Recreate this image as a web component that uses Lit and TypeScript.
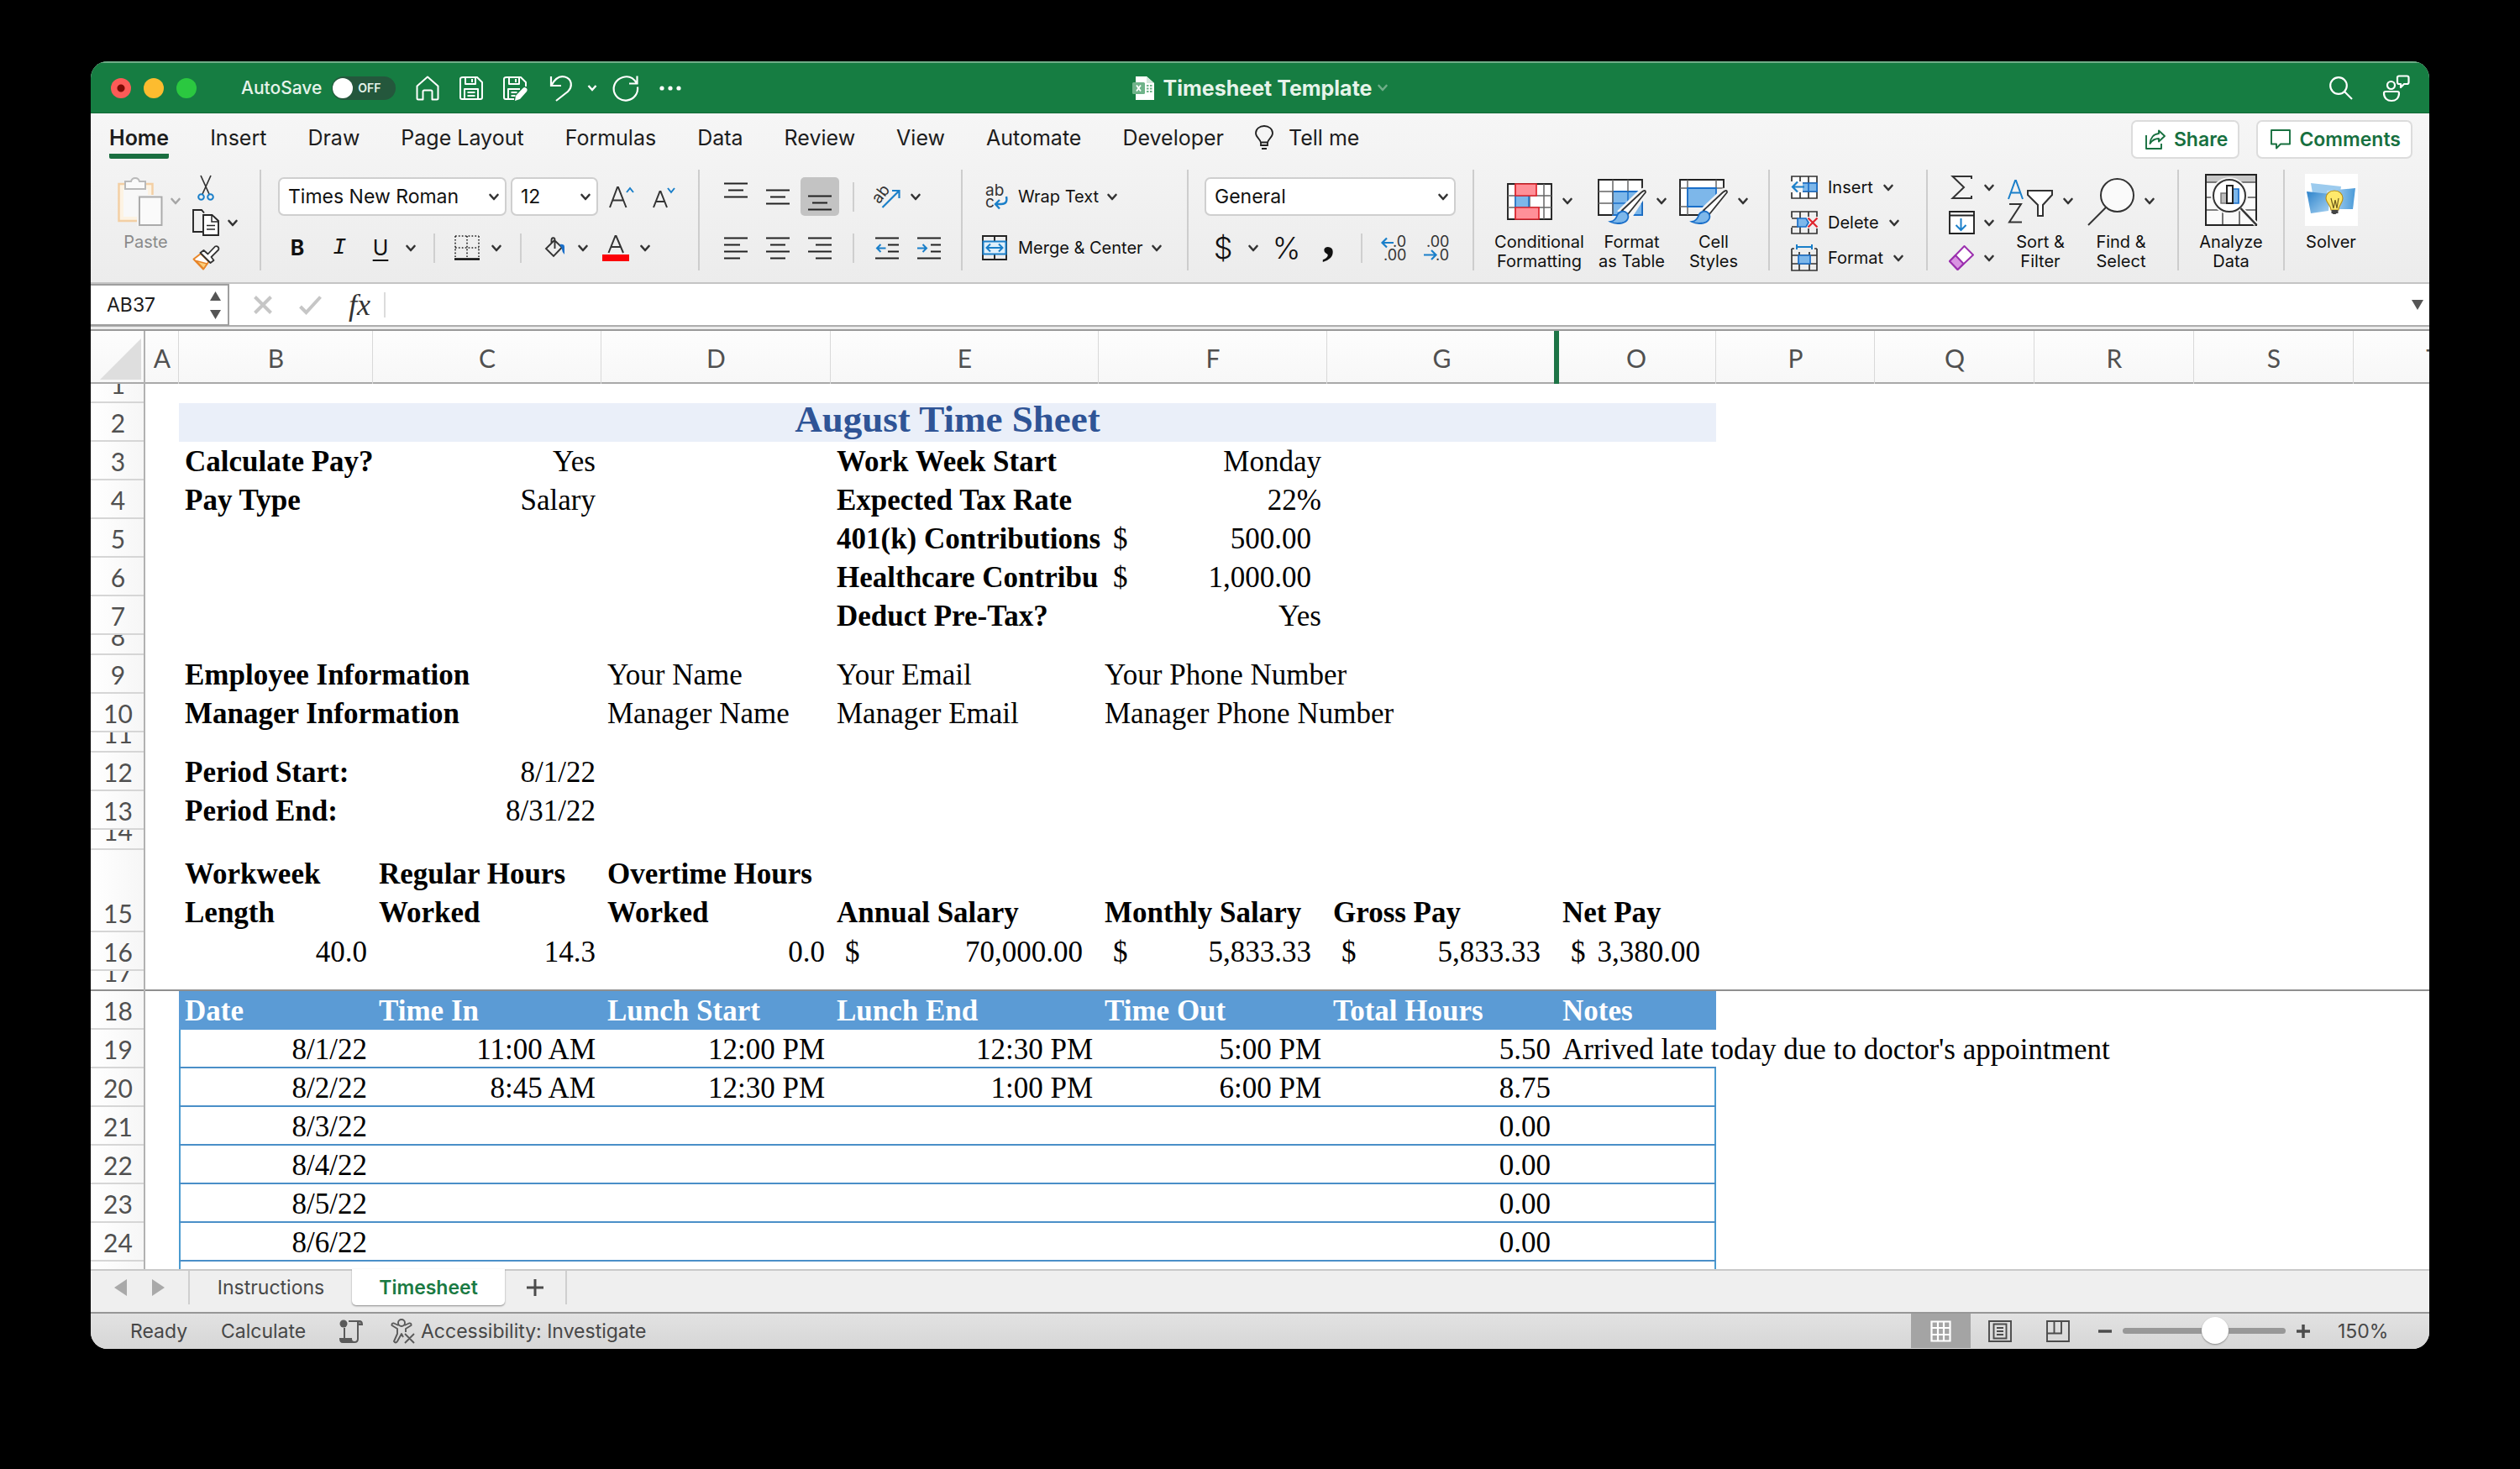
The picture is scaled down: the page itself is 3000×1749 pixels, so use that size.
import { LitElement, html, css, nothing, TemplateResult } from "lit";
import { customElement } from "lit/decorators.js";
import { classMap } from "lit/directives/class-map.js";
import { styleMap } from "lit/directives/style-map.js";

/* ---------- icons ---------- */

const chevron = html`<svg class="chev" width="12" height="9" viewBox="0 0 12 9" fill="none" stroke="currentColor" stroke-width="2.6" stroke-linecap="round" stroke-linejoin="round"><path d="M1.5 2 6 7l4.500-5"/></svg>`;

const ico = {
  home: html`<svg width="28" height="30" viewBox="0 0 28 30" fill="none" stroke="#fff" stroke-width="2" stroke-linejoin="round"><path d="M1.500 12.500 14 1.500l12.500 11V27q0 1.500-1.500 1.500h-5.500V19q0-1.500-1.500-1.500h-8Q8.500 17.500 8.500 19v9.500H3q-1.500 0-1.500-1.500z"/></svg>`,
  save: html`<svg width="28" height="30" viewBox="0 0 28 30" fill="none" stroke="#fff" stroke-width="2" stroke-linejoin="round"><path d="M4 2h17l6 6v18q0 2-2 2H3q-2 0-2-2V4q0-2 3-2zM7 2v8h12V2M15 4v4M6 28V16h16v12M9.500 20h9M9.500 24h9"/></svg>`,
  saveAs: html`<svg width="30" height="32" viewBox="0 0 30 32" fill="none" stroke="#fff" stroke-width="2" stroke-linejoin="round"><path d="M13 29H3q-2 0-2-2V5q0-2 3-2h17l6 6v5M7 3v8h12V3M15 5v4M6 29V17h14M9.500 21h7M9.500 25h5"/><path d="M27 15.500c2 1 2 3 1 4.500l-8 9-6 2 1-6 8.500-9q2-1.500 3.500-.5z" fill="#fff" stroke="none"/></svg>`,
  undo: html`<svg width="28" height="32" viewBox="0 0 28 32" fill="none" stroke="#fff" stroke-width="2.200"><path d="M3 2v11h12M3.500 12.500C8 4 14 1 19.500 2.500 28 5 29 14 23 20L9 31"/></svg>`,
  redo: html`<svg width="32" height="32" viewBox="0 0 32 32" fill="none" stroke="#fff" stroke-width="2.200"><path d="M29.500 1.500v9H20M29 10C25 3.500 19 1 12.500 3 4 5.500.500 13 2 20c2 7.500 9 11.500 16 10.300C26 29 31 22 30 14.500"/></svg>`,
  dots: html`<svg width="26" height="8" viewBox="0 0 26 8" fill="#fff"><circle cx="3" cy="4" r="2.600"/><circle cx="13" cy="4" r="2.600"/><circle cx="23" cy="4" r="2.600"/></svg>`,
  doc: html`<svg width="27" height="28" viewBox="0 0 27 28"><path d="M4 0h13l9 8v20H4z" fill="#fff"/><path d="M17 0v8h9z" fill="#d5e8dc"/><rect x="0" y="7" width="15" height="14" rx="1.500" fill="#6fb389"/><path d="m5 10.500 5 7m0-7-5 7" stroke="#fff" stroke-width="1.800"/><path d="M17 11h2.500M21 11h2.500M17 14.500h2.500M21 14.500h2.500M17 18h2.500M21 18h2.500" stroke="#6fb389" stroke-width="2"/></svg>`,
  search: html`<svg width="28" height="28" viewBox="0 0 28 28" fill="none" stroke="#fff" stroke-width="2.200"><circle cx="11" cy="11" r="9.800"/><path d="m18 18 9 9"/></svg>`,
  people: html`<svg width="32" height="32" viewBox="0 0 32 32" fill="none" stroke="#fff" stroke-width="2.200" stroke-linejoin="round"><circle cx="9.500" cy="12.500" r="4.500"/><path d="M3 20h14q2 0 2 2c0 6-4 9-9 9s-9-3-9-9q0-2 2-2zM19 1.500h9.500q2 0 2 2V9q0 2-2 2H25l-4 4v-4h-2q-2 0-2-2V3.500q0-2 2-2z"/></svg>`,
  bulb: html`<svg width="22" height="29" viewBox="0 0 22 29" fill="none" stroke="#222" stroke-width="1.800"><path d="M7 24v-3C7 17 1 15 1 9.500 1 4.500 5.500 1 11 1s10 3.500 10 8.500C21 15 15 17 15 21v3zM7 20.500h8"/><path d="M8 28h6" stroke-width="2.200"/></svg>`,
  share: html`<svg width="24" height="24" viewBox="0 0 24 24" fill="none" stroke="#17703f" stroke-width="1.900" stroke-linejoin="round"><path d="M1 7v16h18v-6"/><path d="M16 1.500 23 8l-7 6.500V11C11 11 8 13 5.500 17 6 10 10 5.500 16 5z"/></svg>`,
  comment: html`<svg width="24" height="24" viewBox="0 0 24 24" fill="none" stroke="#17703f" stroke-width="1.900" stroke-linejoin="round"><path d="M1 1h22v16.500H12L7 22.500v-5H1z"/></svg>`,
  paste: html`<svg width="54" height="58" viewBox="0 0 54 58"><path d="M1.500 8h40v44h-40z" fill="#fdf3e3" stroke="#f3cfa4" stroke-width="2.500"/><path d="M7 14h29v33H7z" fill="#f8f8f8"/><path d="M9 5h7q1-4 5-4t5 4h7v9H9z" fill="#fafafa" stroke="#b9b9b9" stroke-width="2"/><path d="M23 21h31v37H23z" fill="#f4f4f4"/><path d="M26 23.500h26.500V57H26z" fill="#fafafa" stroke="#ababab" stroke-width="2"/></svg>`,
  cut: html`<svg width="20" height="31" viewBox="0 0 20 31" fill="none"><path d="m4 1 10 22M16 1 6 23" stroke="#333" stroke-width="1.700"/><circle cx="4.500" cy="26.500" r="3.300" stroke="#1a7fc9" stroke-width="2"/><circle cx="15.500" cy="26.500" r="3.300" stroke="#1a7fc9" stroke-width="2"/></svg>`,
  copy: html`<svg width="32" height="32" viewBox="0 0 32 32" fill="none" stroke="#262626" stroke-width="1.900"><path d="M12 27H1V1h10l3 3.500"/><path d="M13 7h10.500L31 14v17H13z" fill="#fff"/><path d="M23 7v8h8M17 19.500h10M17 24h10" stroke-width="1.500"/></svg>`,
  brush: html`<svg width="32" height="30" viewBox="0 0 32 30" stroke-linejoin="round"><path d="m10 10-8.500 6.500L13 28.500l6.500-9z" fill="#fff" stroke="#e8862a" stroke-width="2"/><path d="m4.500 18.500 9 9.500 4-6z" fill="#fbcf7d" stroke="#e8862a" stroke-width="1.600"/><path d="m9.500 9 4-3 5 4.500 8.500-9q2-1 3.500.5t.5 3.500l-8.500 8.500 3 4-4 3z" fill="#fff" stroke="#333" stroke-width="1.800"/></svg>`,
  grow: html`<svg width="30" height="28" viewBox="0 0 30 28" fill="none"><path d="M1 27 10 3h1l9.500 24M4.500 18.500h12.500" stroke="#333" stroke-width="2"/><path d="m21 9 4-5 4 5" stroke="#1a7fc9" stroke-width="2"/></svg>`,
  shrink: html`<svg width="27" height="28" viewBox="0 0 27 28" fill="none"><path d="M1 27 8.500 8h1L17 27M4 20h10.500" stroke="#333" stroke-width="2"/><path d="m18 4 4 5 4-5" stroke="#1a7fc9" stroke-width="2"/></svg>`,
  borders: html`<svg width="30" height="30" viewBox="0 0 30 30" fill="none" stroke="#222" stroke-width="1.600"><path d="M1 1h28M1 1v26M29 1v26M15 1v26M1 15h28" stroke-dasharray="1.700 2.200"/><path d="M0 28.500h30" stroke-width="2.400" stroke="#000"/></svg>`,
  bucket: html`<svg width="26" height="26" viewBox="0 0 26 26" fill="none"><path d="m12 4 9 8.500L11 23 2 14zM12.500 14V3.500Q12.500 1 10.500 1.200T8.500 4v4" stroke="#333" stroke-width="1.900"/><path d="M18 9q6-1 6 3v9q-3-3-3.500-8z" fill="#1a6fc9"/></svg>`,
  fontColor: html`<svg width="32" height="32" viewBox="0 0 32 32" fill="none"><path d="m7.500 22 8-20h1l8.500 20M10.500 15h11.500" stroke="#333" stroke-width="2"/><path d="M0 24h32v8H0z" fill="#fb0007"/></svg>`,
  angle: html`<svg width="32" height="30" viewBox="0 0 32 30" fill="none"><g transform="rotate(-52 10 12)"><text x="-2" y="17" font-family="Inter, sans-serif" font-size="19" fill="#333">ab</text></g><path d="M10.500 28 30 8.500M22 8h8.500v9" stroke="#1a7fc9" stroke-width="2.200"/></svg>`,
  outdent: html`<svg width="28" height="27" viewBox="0 0 28 27" fill="none"><path d="M0 1.500h28M15 9.500h13M15 17.500h13M0 25.500h28" stroke="#222" stroke-width="2"/><path d="M12.500 13.500H2M6.500 9 2 13.500 6.500 18" stroke="#1a7fc9" stroke-width="2"/></svg>`,
  indent: html`<svg width="28" height="27" viewBox="0 0 28 27" fill="none"><path d="M0 1.500h28M16 9.500h12M16 17.500h12M0 25.500h28" stroke="#222" stroke-width="2"/><path d="M0 13.500h11M6.500 9l4.500 4.500L6.500 18" stroke="#1a7fc9" stroke-width="2"/></svg>`,
  wrap: html`<svg width="30" height="31" viewBox="0 0 30 31" fill="none"><text x="4" y="14" font-family="Inter, sans-serif" font-size="19" fill="#333">ab</text><text x="4" y="28" font-family="Inter, sans-serif" font-size="19" fill="#333">c</text><path d="M29 15q2 9-6 9h-6.500M21 19l-5 5 5 5.500" stroke="#1a7fc9" stroke-width="2.400"/></svg>`,
  merge: html`<svg width="30" height="30" viewBox="0 0 30 30" fill="none"><path d="M1 1h28v28H1zM15 1v6M15 23v6" stroke="#222" stroke-width="1.900"/><path d="M1.500 7.500h27v15h-27z" fill="#dff0fb" stroke="#1a7fc9" stroke-width="2"/><path d="M6 15h18M10 10.500 5.500 15l4.500 4.500M20 10.500l4.500 4.500-4.500 4.500" stroke="#1a7fc9" stroke-width="2"/></svg>`,
  decInc: html`<svg width="31" height="31" viewBox="0 0 31 31" fill="none"><text x="14" y="14" font-family="Inter, sans-serif" font-size="18" fill="#333">.0</text><text x="3" y="30" font-family="Inter, sans-serif" font-size="18" fill="#333">.00</text><path d="M15 9H2M7 3.500 1.500 9 7 14.500" stroke="#1a7fc9" stroke-width="2.200"/></svg>`,
  decDec: html`<svg width="31" height="31" viewBox="0 0 31 31" fill="none"><text x="3" y="14" font-family="Inter, sans-serif" font-size="18" fill="#333">.00</text><text x="14" y="30" font-family="Inter, sans-serif" font-size="18" fill="#333">.0</text><path d="M0 23.500h14M9 18l5.500 5.500L9 29" stroke="#1a7fc9" stroke-width="2.200"/></svg>`,
  condFmt: html`<svg width="54" height="44" viewBox="0 0 54 44" fill="none"><path d="M1 1h52v42H1z" fill="#fff" stroke="#222" stroke-width="1.900"/><path d="M10 1v42M44 1v42M27 1v42M1 15h52M1 29h52" stroke="#666" stroke-width="1.500"/><path d="M10 15h16v14H10z" fill="#7db7ea" stroke="#1a6fc9" stroke-width="1.500"/><path d="M10 1h25v14H10zM10 29h28v14H10z" fill="#ff9098" stroke="#e0242c" stroke-width="1.700"/></svg>`,
  fmtTable: html`<svg width="58" height="54" viewBox="0 0 58 54" fill="none"><path d="M1 1h52v42H1z" fill="#fff" stroke="#222" stroke-width="1.900"/><path d="M18 15h35v28H18z" fill="#7db7ea" stroke="#1a6fc9" stroke-width="1.800"/><path d="M18 1v14M36 1v14M1 15h17M1 29h17M18 15v28" stroke="#666" stroke-width="1.500"/><path d="M36 15v28M18 29h35" stroke="#1a6fc9" stroke-width="1.500"/><path d="M27 38 52 14q6-3 6 1L38 46z" fill="#fff" stroke="#f3f3f3" stroke-width="5"/><path d="M29 37.500 52 16q5-4 5 0L36 42z" fill="#fff" stroke="#333" stroke-width="1.800"/><path d="M15 51q6-1 8-7c2-6 9-7 12-3s1 10-6 11.500q-8 1.500-14-1.500z" fill="#7db7ea" stroke="#1a6fc9" stroke-width="1.800"/></svg>`,
  cellStyles: html`<svg width="58" height="54" viewBox="0 0 58 54" fill="none"><path d="M1 1h52v10H10v32H1z" fill="#fff"/><path d="M53 12V1H1v42h24" stroke="#222" stroke-width="1.900"/><path d="M10 1v42M44 1v10M1 11h52M1 33h9" stroke="#666" stroke-width="1.500"/><path d="M10 11h34v22H10z" fill="#7db7ea" stroke="#1a6fc9" stroke-width="1.800"/><path d="M27 38 52 14q6-3 6 1L38 46z" fill="#fff" stroke="#f3f3f3" stroke-width="5"/><path d="M29 37.500 52 16q5-4 5 0L36 42z" fill="#fff" stroke="#333" stroke-width="1.800"/><path d="M15 51q6-1 8-7c2-6 9-7 12-3s1 10-6 11.500q-8 1.500-14-1.500z" fill="#7db7ea" stroke="#1a6fc9" stroke-width="1.800"/></svg>`,
  insCells: html`<svg width="32" height="28" viewBox="0 0 32 28" fill="none"><path d="M1 1h30v26H1zM11 1v26M21 1v26M1 9h30M1 19h30" fill="#fff" stroke="#333" stroke-width="1.700"/><path d="M12 9h19v10H12zM21 9v10" fill="#7db7ea" stroke="#1a6fc9" stroke-width="1.700"/><path d="M0 7h14v13H0z" fill="#f3f3f3"/><path d="M16 13.500H2M8 7.500l-6 6 6 6" stroke="#1a7fc9" stroke-width="2.200"/></svg>`,
  delCells: html`<svg width="32" height="28" viewBox="0 0 32 28" fill="none"><path d="M1 8V1h30v6M1 20v7h30v-6M11 1v8M21 1v6M11 19v8M21 21v6M1 9h8M1 19h8" stroke="#333" stroke-width="1.700"/><path d="M8 9h10l3 5-3 5H8z" fill="#7db7ea" stroke="#1a6fc9" stroke-width="1.700"/><path d="m20.500 8.500 11 11m0-11-11 11" stroke="#e0242c" stroke-width="2.200"/></svg>`,
  fmtCells: html`<svg width="32" height="32" viewBox="0 0 32 32" fill="none"><path d="M1 5v26h30V5M10 9v22M22 9v22M1 13h30M1 23h30M1 5h3M28 5h3" stroke="#333" stroke-width="1.700"/><path d="M9 13h14v10H9z" fill="#7db7ea" stroke="#1a6fc9" stroke-width="1.700"/><path d="M7 3h18M7 0v6M25 0v6" stroke="#1a7fc9" stroke-width="2"/></svg>`,
  sum: html`<svg width="25" height="28" viewBox="0 0 25 28" fill="none" stroke="#333" stroke-width="2"><path d="M24 4V1H1.500L15 14 1.500 27H24v-3"/></svg>`,
  fill: html`<svg width="31" height="28" viewBox="0 0 31 28" fill="none"><path d="M1 1h29v26H1zM1 5.500h29" fill="#fff" stroke="#222" stroke-width="1.900"/><path d="M14.500 9v13M8.500 17l6 6 6-6" stroke="#1a7fc9" stroke-width="2"/></svg>`,
  eraser: html`<svg width="30" height="30" viewBox="0 0 30 30" fill="none" stroke="#9b2fae" stroke-width="2" stroke-linejoin="round"><path d="M18.500 1 29 11.500 10.500 29 1 19z" fill="#fff"/><path d="m8 12-7 7 9.500 10 7-7z" fill="#d993e2"/></svg>`,
  sort: html`<svg width="54" height="52" viewBox="0 0 54 52" fill="none" stroke-width="2"><path d="M1 23 9 1h1l8 22M4 15.500h11" stroke="#1a7fc9"/><path d="M2 29h14L2 50.500h15" stroke="#333"/><path d="M24 13h29v5L42 30v13h-6V30L24 18z" fill="#fff" stroke="#333"/></svg>`,
  find: html`<svg width="56" height="57" viewBox="0 0 56 57" fill="none" stroke="#333" stroke-width="2"><circle cx="35.500" cy="20.500" r="19.500" fill="#fafafa"/><path d="M22 35 1 56"/></svg>`,
  analyze: html`<svg width="62" height="62" viewBox="0 0 62 62" fill="none"><path d="M1 1h60v60H1z" fill="#fafafa"/><path d="M1 1h60v9H1z" fill="#c8c8c8"/><path d="M1 10h60M1 28h60M1 43h60M21 43v18M41 43v18" stroke="#555" stroke-width="1.600"/><path d="M1 1h60v60H1z" stroke="#222" stroke-width="2"/><circle cx="29" cy="26" r="22" fill="#f6f6f6"/><circle cx="29" cy="26" r="19" fill="#fff" stroke="#333" stroke-width="2"/><path d="M19 23h7v12h-7z" fill="#bdbdbd" stroke="#777" stroke-width="1.500"/><path d="M33 18h7v17h-7z" fill="#7db7ea" stroke="#1a6fc9" stroke-width="1.700"/><path d="M26 14h7v21h-7z" fill="#fff" stroke="#222" stroke-width="2"/><path d="m42.500 41 18.500 19" stroke="#f6f6f6" stroke-width="6"/><path d="m42.500 41 19 20" stroke="#333" stroke-width="2.500"/></svg>`,
  solver: html`<svg width="63" height="62" viewBox="0 0 63 62"><defs><linearGradient id="sb" x1="0" y1="0" x2="1" y2="1"><stop offset="0" stop-color="#2d83cb"/><stop offset="1" stop-color="#a9d3f2"/></linearGradient><linearGradient id="sc" x1="1" y1="0" x2="0" y2="0"><stop offset="0" stop-color="#4a9ad8"/><stop offset="1" stop-color="#c4e2f6"/></linearGradient></defs><path fill="#fff" d="M0 0h63v62H0z"/><path d="m7 11 36 4-2 14-32-6z" fill="#9ccbee"/><path d="m26 20 34-3-3 25H30z" fill="url(#sc)"/><path d="m2 21 28 3-2 20-21 3z" fill="url(#sb)"/><path d="M35 20c6 0 10 4 10 9 0 6-5 8-5 14h-9c0-6-6-8-6-14 0-5 4-9 10-9z" fill="#ffe96b" stroke="#b98f15" stroke-width="1.200"/><path d="m31 29 3 12 2-10 2 10 2-12" fill="none" stroke="#6d5a1c" stroke-width="1.200"/><path d="M31.500 43h8v4h-2l-1 1h-3l-1-1h-1z" fill="#444"/></svg>`,
  script: html`<svg width="28" height="28" viewBox="0 0 28 28" fill="none" stroke="#5a5a5a" stroke-width="2"><circle cx="5" cy="5" r="4.500" fill="#5a5a5a" stroke="none"/><path d="M11 2h13q3 0 3 4h-5V2" fill="#8a8a8a"/><path d="M22 4v19q0 4-4 4M6 10v13"/><path d="M18 27H4q-3 0-3-4h13q0 4 4 4z" fill="#5a5a5a"/></svg>`,
  access: html`<svg width="30" height="30" viewBox="0 0 30 30" fill="none" stroke="#5a5a5a" stroke-width="1.900" stroke-linejoin="round"><circle cx="13" cy="5" r="4"/><path d="M9.500 8 4 5.500Q1 5 1.500 8L8 12v6L4 27q2 3 4 0l5-9 2 4M16.500 8 22 5.500Q25 5 24.500 8L18 12v4M17 18l11 11m0-11L17 29"/></svg>`,
  normalView: html`<svg width="25" height="26" viewBox="0 0 25 26" fill="none" stroke="#fff" stroke-width="2.200"><path d="M1.500 1.500h22v23h-22zM9 1.500v23M16 1.500v23M1.500 9h22M1.500 17h22"/></svg>`,
  pageView: html`<svg width="28" height="26" viewBox="0 0 28 26" fill="none" stroke="#4c4c4c" stroke-width="1.900"><path d="M1 1h26v24H1zM6.500 4.500h15v17h-15zM10 9h8M10 13h8M10 17h8"/></svg>`,
  breakView: html`<svg width="28" height="26" viewBox="0 0 28 26" fill="none" stroke="#4c4c4c" stroke-width="1.900"><path d="M1 1h26v24H1zM9.500 1v14M18 1v14.500H1"/></svg>`,
};

/** Paragraph-alignment glyph: one bar per entry, [start, end] within 28px. */
const bars = (lines: number[][], height: number, offset = 0) => html`<svg width="28" height=${height} viewBox="0 0 28 ${height}" stroke="#222" stroke-width="2">
  ${lines.map(([a, b], i) => html`<svg overflow="visible"><path d="M${a} ${offset + 1.5 + i * 8}H${b}" /></svg>`)}
</svg>`;

/* ---------- worksheet data ---------- */

type Cell = { t: string; bold?: boolean; right?: boolean; money?: boolean; wrap?: boolean };
type Row = { n: number; kind?: "first-row" | "short" | "tall" | "title" | "head" | "data" | "plain"; frozen?: boolean; cells?: Record<string, Cell> };

const COLS = ["A", "B", "C", "D", "E", "F", "G", "O", "P", "Q", "R", "S", "T"];
const WIDTHS = [40, 231, 272, 273, 319, 272, 273, 190, 189, 190, 190, 190, 190];

const b = (t: string): Cell => ({ t, bold: true });
const bw = (t: string): Cell => ({ t, bold: true, wrap: true });
const l = (t: string): Cell => ({ t });
const r = (t: string): Cell => ({ t, right: true });
const m = (t: string): Cell => ({ t, money: true });

const ROWS: Row[] = [
  { n: 1, kind: "first-row" },
  { n: 2, kind: "title" },
  { n: 3, cells: { B: b("Calculate Pay?"), C: r("Yes"), E: b("Work Week Start"), F: r("Monday") } },
  { n: 4, cells: { B: b("Pay Type"), C: r("Salary"), E: b("Expected Tax Rate"), F: r("22%") } },
  { n: 5, cells: { E: b("401(k) Contributions"), F: m("500.00") } },
  { n: 6, cells: { E: b("Healthcare Contribu"), F: m("1,000.00") } },
  { n: 7, cells: { E: b("Deduct Pre-Tax?"), F: r("Yes") } },
  { n: 8, kind: "short" },
  { n: 9, cells: { B: b("Employee Information"), D: l("Your Name"), E: l("Your Email"), F: l("Your Phone Number") } },
  { n: 10, cells: { B: b("Manager Information"), D: l("Manager Name"), E: l("Manager Email"), F: l("Manager Phone Number") } },
  { n: 11, kind: "short" },
  { n: 12, cells: { B: b("Period Start:"), C: r("8/1/22") } },
  { n: 13, cells: { B: b("Period End:"), C: r("8/31/22") } },
  { n: 14, kind: "short" },
  { n: 15, kind: "tall", cells: { B: bw("Workweek Length"), C: bw("Regular Hours Worked"), D: bw("Overtime Hours Worked"), E: b("Annual Salary"), F: b("Monthly Salary"), G: b("Gross Pay"), O: b("Net Pay") } },
  { n: 16, cells: { B: r("40.0"), C: r("14.3"), D: r("0.0"), E: m("70,000.00"), F: m("5,833.33"), G: m("5,833.33"), O: m("3,380.00") } },
  { n: 17, kind: "short", frozen: true },
  { n: 18, kind: "head", cells: { B: b("Date"), C: b("Time In"), D: b("Lunch Start"), E: b("Lunch End"), F: b("Time Out"), G: b("Total Hours"), O: b("Notes") } },
  { n: 19, kind: "data", cells: { B: r("8/1/22"), C: r("11:00 AM"), D: r("12:00 PM"), E: r("12:30 PM"), F: r("5:00 PM"), G: r("5.50"), O: l("Arrived late today due to doctor's appointment") } },
  { n: 20, kind: "data", cells: { B: r("8/2/22"), C: r("8:45 AM"), D: r("12:30 PM"), E: r("1:00 PM"), F: r("6:00 PM"), G: r("8.75") } },
  { n: 21, kind: "data", cells: { B: r("8/3/22"), G: r("0.00") } },
  { n: 22, kind: "data", cells: { B: r("8/4/22"), G: r("0.00") } },
  { n: 23, kind: "data", cells: { B: r("8/5/22"), G: r("0.00") } },
  { n: 24, kind: "data", cells: { B: r("8/6/22"), G: r("0.00") } },
  { n: 25, kind: "data" },
];

const UI_FONT = css`Inter, "Liberation Sans", sans-serif`;

/* ---------- worksheet grid ---------- */

@customElement("sheet-grid")
export class SheetGrid extends LitElement {
  static styles = css`
    :host { display: block; flex: 1; min-height: 0; overflow: hidden; background: #fff; }
    table { table-layout: fixed; border-collapse: separate; border-spacing: 0; width: 100%; font: 35px/45px "Liberation Serif", "Times New Roman", serif; color: #000; }
    .rowhead { width: 65px; }
    th, td { padding: 0; }
    thead th { height: 63px; font: 30px/46px Lato, sans-serif; color: #505050; text-align: center; background: linear-gradient(#fdfdfd, #f7f7f7); box-shadow: inset -1px 0 #d9d9d9, inset 0 -2px #a9a9a9; }
    thead .corner { vertical-align: bottom; text-align: right; box-shadow: inset -2px 0 #b2b2b2, inset 0 -2px #a9a9a9; }
    .corner svg { display: block; margin: 0 5px 5px auto; }
    thead .cut-left { box-shadow: inset -3px 0 #1d7446, inset 0 -2px #a9a9a9; }
    thead .cut-right { box-shadow: inset 3px 0 #1d7446, inset -1px 0 #d9d9d9, inset 0 -2px #a9a9a9; }
    .num { font: 30px/46px Lato, sans-serif; color: #505050; background: linear-gradient(90deg, #fff, #f6f6f6); box-shadow: inset -2px 0 #b2b2b2, inset 0 -2px #d6d6d6; }
    .numbox { display: flex; align-items: flex-end; justify-content: center; height: 46px; overflow: hidden; }
    .first-row .numbox { height: 23px; }
    .short .numbox { height: 24px; }
    .tall .numbox { height: 98px; }
    td { padding: 1px 7px 0; white-space: nowrap; vertical-align: bottom; }
    .tall td { line-height: 46px; }
    .bold { font-weight: 700; }
    .right { text-align: right; }
    .wrap { white-space: normal; }
    .money { padding: 1px 19px 0 17px; }
    .pair { display: flex; justify-content: space-between; }
    .banner { background: #eaeff9; color: #2f5496; font-size: 45px; line-height: 36px; font-weight: 700; text-align: center; vertical-align: top; }
    .frozen td { box-shadow: inset 0 -2px #8f8f8f; }
    .frozen .num { box-shadow: inset -2px 0 #b2b2b2, inset 0 -2px #8f8f8f; }
    .head .tbl { background: #5b9bd5; color: #fff; }
    .data .tbl { box-shadow: inset 0 -2px #4a8fc8; }
    .data .tbl.first { box-shadow: inset 0 -2px #4a8fc8, inset 2px 0 #4a9bd0; }
    .data .tbl.last { box-shadow: inset 0 -2px #4a8fc8, inset -2px 0 #4a9bd0; }
    .data .tbl.last.spill { box-shadow: inset 0 -2px #4a8fc8; }
  `;

  private cell(row: Row, col: string): TemplateResult {
    const c = row.cells?.[col];
    const inTable = col >= "B" && col <= "O";
    const cls = classMap({
      bold: !!c?.bold, right: !!c?.right, wrap: !!c?.wrap, money: !!c?.money,
      tbl: inTable, first: col === "B", last: col === "O", spill: col === "O" && !!c,
    });
    if (!c) return html`<td class=${cls}></td>`;
    return html`<td class=${cls}>${c.money ? html`<div class="pair"><span>$</span><span>${c.t}</span></div>` : c.t}</td>`;
  }

  render() {
    return html`<table aria-label="Timesheet">
      <colgroup>
        <col class="rowhead">
        ${WIDTHS.map((w) => html`<col style=${styleMap({ width: `${w}px` })}>`)}
      </colgroup>
      <thead><tr>
        <th class="corner" aria-label="Select all"><svg width="49" height="49" viewBox="0 0 49 49"><path d="M49 0v49H0z" fill="#dedede"/></svg></th>
        ${COLS.map((c) => html`<th scope="col" class=${classMap({ "cut-left": c === "G", "cut-right": c === "O" })}>${c}</th>`)}
      </tr></thead>
      <tbody>
        ${ROWS.map((row) => html`<tr class=${`${row.kind ?? "plain"} ${row.frozen ? "frozen" : ""}`}>
          <th class="num" scope="row"><div class="numbox">${row.n}</div></th>
          ${row.kind === "title"
            ? html`<td></td><td class="banner" colspan="7">August Time Sheet</td><td colspan="5"></td>`
            : COLS.map((c) => this.cell(row, c))}
        </tr>`)}
      </tbody>
    </table>`;
  }
}

/* ---------- application window ---------- */

const TABS = ["Home", "Insert", "Draw", "Page Layout", "Formulas", "Data", "Review", "View", "Automate", "Developer"];

@customElement("app-root")
export class AppRoot extends LitElement {
  static styles = css`
    :host { display: block; box-sizing: border-box; height: 100vh; padding: 73px 108px 143px; background: #000; font: 25px/30px ${UI_FONT}; color: #1c1c1c; }
    *, *::before { box-sizing: border-box; }
    button, input, select { font: inherit; color: inherit; border: 0; background: none; padding: 0; margin: 0; outline: none; }
    button { display: flex; align-items: center; justify-content: center; }
    svg { display: block; flex: none; overflow: visible; }
    .window { display: flex; flex-direction: column; height: 100%; border-radius: 20px; overflow: hidden; background: #efefef; }

    .titlebar { display: grid; grid-template-columns: 1fr auto 1fr; align-items: center; height: 62px; padding: 0 23px 0 24px; background: #167d42; border-top: 2px solid #6fae88; border-bottom: 1px solid #126a37; color: #e6f3ea; }
    .left, .right-tools { display: flex; align-items: center; }
    .right-tools { justify-content: flex-end; gap: 36px; }
    .lights { display: flex; gap: 15px; margin-right: 53px; }
    .light { width: 24px; height: 24px; border-radius: 50%; }
    .close { background: radial-gradient(circle, #7d0a05 4px, #fc5b57 5px); }
    .min { background: #fdbc2f; }
    .max { background: #2bc840; }
    .autosave { display: flex; align-items: center; gap: 12px; font-size: 21px; font-weight: 500; margin-right: 24px; }
    .switch { display: flex; align-items: center; gap: 6px; width: 76px; height: 28px; border-radius: 14px; background: #24573c; font-size: 14px; font-weight: 600; padding: 0 2px 0 1px; }
    .switch input { appearance: none; width: 24px; height: 24px; border-radius: 50%; background: #fff; }
    .quick { display: flex; align-items: center; gap: 24px; }
    .undo { display: flex; align-items: center; gap: 18px; margin-right: -6px; }
    .title { display: flex; align-items: center; gap: 10px; font-size: 25px; font-weight: 700; margin: 0; }
    .title .chev { color: #6fae88; width: 14px; margin-left: -4px; }

    .ribbon { background: linear-gradient(#f6f6f6, #ececec); height: 203px; border-bottom: 2px solid #c4c4c4; }
    .tabrow { display: flex; align-items: flex-start; justify-content: space-between; height: 67px; padding: 8px 20px 0 22px; }
    .tabs { display: flex; gap: 49px; padding-top: 6px; }
    .tab { height: 40px; align-items: flex-start; }
    .tab.active { font-weight: 600; border-bottom: 6px solid #1a6e40; border-radius: 2px; }
    .tellme { gap: 18px; margin-left: -12px; align-items: flex-start; height: 40px; }
    .actions { display: flex; gap: 20px; }
    .action { height: 46px; gap: 10px; padding: 0 12px 0 15px; border: 2px solid #dcdcdc; border-radius: 7px; background: #fff; color: #17703f; font-size: 23px; font-weight: 600; }

    .groups { display: grid; grid-template-columns: 203px 522px 313px 269px 340px 352px 188px 299px 126px 1fr; }
    .group { height: 120px; border-right: 2px solid #cdcdcd; font-size: 20px; color: #111; display: flex; }
    .group:last-child { border-right: 0; }
    .stack { display: grid; grid-template-rows: 46px 46px; row-gap: 15px; padding-top: 9px; justify-items: start; align-content: start; }
    .line { display: grid; justify-items: center; align-items: center; height: 46px; }
    .chev { color: #333; }
    .muted, .muted .chev { color: #8a8a8a; }
    .muted .chev { color: #a6a6a6; }
    .sep { width: 2px; height: 35px; background: #cfcfcf; }
    .pick { display: grid; grid-template-columns: 1fr 12px; align-items: center; height: 46px; background: #fff; border: 2px solid #cfcfcf; border-radius: 7px; font-size: 23px; padding-right: 7px; }
    .pick select { appearance: none; grid-area: 1 / 1 / 2 / 3; width: 100%; padding-left: 10px; height: 42px; }
    .pick .chev { grid-area: 1 / 2; pointer-events: none; }

    .g-font { padding-left: 20px; }
    .g-font .line.top { display: flex; }
    .family { width: 272px; margin-right: 5px; }
    .size { width: 104px; margin-right: 13px; }
    .grow { margin-right: 22px; }
    .marks { grid-template-columns: 46px 54px 44px 28px 28px 50px 20px 38px 43px 24px 53px 18px; font-size: 27px; }
    .marks .bold { font-weight: 700; font-size: 25px; }
    .marks .italic { font-family: "Liberation Mono", monospace; font-style: italic; }
    .marks .under { text-decoration: underline; text-decoration-thickness: 2px; text-underline-offset: 5px; font-size: 25px; }
    .g-align { padding-left: 18px; }
    .vert { grid-template-columns: 49px 52px 48px 32px 47px 22px; }
    .horiz { grid-template-columns: 49px 52px 48px 32px 47px 53px; }
    .pressed { width: 46px; height: 46px; border-radius: 5px; background: #c3c3c3; }
    .g-wrap { padding-left: 23px; }
    .labeled { gap: 10px; height: 46px; }
    .labeled svg:first-child { margin-right: 3px; }
    .g-number { padding-left: 19px; }
    .format { width: 299px; }
    .numbers { grid-template-columns: 44px 28px 51px 49px 29px 48px 54px; }
    .sym { font-size: 36px; font-weight: 300; }
    .comma { font: 700 60px/20px "Liberation Serif", serif; height: 46px; padding-bottom: 24px; }
    .big { display: grid; grid-template-rows: 58px 46px; row-gap: 8px; padding-top: 9px; line-height: 23px; text-align: center; justify-items: center; align-content: start; align-items: start; }
    .pic { display: flex; align-items: center; gap: 12px; height: 58px; }
    .pic .chev { margin-bottom: 2px; }
    .g-styles { display: grid; grid-template-columns: 123px 97px 98px; padding-left: 16px; }
    .rows { display: grid; grid-template-rows: repeat(3, 42px); justify-items: start; align-items: center; }
    .g-cells { padding-left: 25px; }
    .g-cells .rows button { gap: 12px; }
    .g-edit { padding-left: 25px; }
    .g-edit .rows { width: 54px; }
    .g-edit .rows button { display: grid; grid-template-columns: 30px 12px; column-gap: 12px; justify-items: center; }
    .g-edit .big { width: 96px; }
    .g-edit .sort { margin-left: 7px; }
    .g-clip { padding-left: 32px; }
    .g-clip .paste { width: 74px; }
    .g-clip .paste .label { margin-right: 7px; }
    .g-clip .pic { gap: 9px; }
    .g-clip .rows { padding-left: 15px; }
    .g-clip .rows button { display: grid; grid-template-columns: 32px 12px; column-gap: 10px; justify-items: center; }
    .g-analyze { justify-content: center; }
    .g-solver { justify-content: center; width: 110px; }
    .solo .pic { height: 62px; }
    .solo { grid-template-rows: 62px 46px; padding-top: 5px; }

    .formula { display: flex; align-items: center; height: 56px; background: #fff; border-bottom: 2px solid #999; box-shadow: inset 0 -3px #ececec, inset 0 -5px #adadad; padding-bottom: 4px; }
    .namebox { display: flex; align-items: center; width: 165px; height: 50px; border: 2px solid #9f9f9f; border-left: 0; padding: 0 8px 0 19px; font-size: 23px; }
    .namebox input { flex: 1; min-width: 0; }
    .namebox button { flex-direction: column; }
    .fx { display: grid; grid-template-columns: 24px 28px 30px; column-gap: 30px; align-items: center; padding: 0 14px 0 28px; }
    .fxlabel { font: italic 36px/40px "Liberation Serif", serif; color: #333; }
    .entry { flex: 1; min-width: 0; height: 30px; border-left: 2px solid #dcdcdc; padding-left: 10px; }
    .expand { padding-right: 7px; }

    .sheets { display: flex; height: 51px; background: #efefef; border-top: 2px solid #c9c9c9; font-size: 23px; color: #484848; }
    .arrows { display: flex; align-items: center; gap: 30px; width: 118px; height: 40px; padding-left: 28px; border-right: 2px solid #cfcfcf; }
    .sheet { height: 40px; width: 193px; }
    .sheet.on { width: 182px; height: 43px; margin-top: -2px; background: #fff; border-radius: 0 0 5px 5px; box-shadow: 0 1px 2px #888; color: #1a7a43; font-weight: 600; }
    .add { width: 74px; height: 40px; border-right: 2px solid #cfcfcf; }

    .status { display: flex; align-items: center; height: 44px; border-top: 2px solid #979797; background: linear-gradient(#e2e2e2, #d6d6d6); font-size: 23px; color: #474747; padding: 0 0 1px 47px; }
    .ready { width: 108px; }
    .calc { width: 141px; }
    .a11y { gap: 6px; margin-left: 33px; }
    .views { display: flex; margin-left: auto; align-items: center; }
    .view { width: 69px; height: 41px; }
    .view.on { background: #a4a4a4; width: 71px; }
    .zoom { display: flex; align-items: center; gap: 13px; margin-left: 14px; }
    .zoom input { appearance: none; width: 194px; height: 32px; }
    .zoom input::-webkit-slider-runnable-track { height: 7px; border-radius: 4px; background: #989898; }
    .zoom input::-webkit-slider-thumb { appearance: none; width: 32px; height: 32px; margin-top: -13px; border-radius: 50%; background: #fff; box-shadow: 0 1px 2px #888; }
    .pct { width: 129px; padding-left: 20px; }
  `;

  private big(icon: TemplateResult, top: string, bottom: string, chev = true, cls = "") {
    return html`<button class=${`big ${cls}`}>
      <span class="pic">${icon}${chev ? chevron : nothing}</span>
      <span class="label">${top}${bottom ? html`<br>${bottom}` : nothing}</span>
    </button>`;
  }

  private pick(cls: string, label: string, value: string) {
    return html`<span class=${`pick ${cls}`}><select aria-label=${label}><option>${value}</option></select>${chevron}</span>`;
  }

  private titlebar() {
    return html`<header class="titlebar">
      <div class="left">
        <div class="lights">
          <button class="light close" aria-label="Close"></button>
          <button class="light min" aria-label="Minimize"></button>
          <button class="light max" aria-label="Zoom window"></button>
        </div>
        <label class="autosave">AutoSave<span class="switch"><input type="checkbox" role="switch">OFF</span></label>
        <div class="quick">
          <button aria-label="Home">${ico.home}</button>
          <button aria-label="Save">${ico.save}</button>
          <button aria-label="Save As">${ico.saveAs}</button>
          <span class="undo"><button aria-label="Undo">${ico.undo}</button>
            <button aria-label="Undo history"><svg width="12" height="9" viewBox="0 0 12 9" fill="none" stroke="#fff" stroke-width="2.400"><path d="M1.500 2 6 7l4.500-5"/></svg></button></span>
          <button aria-label="Redo">${ico.redo}</button>
          <button aria-label="More">${ico.dots}</button>
        </div>
      </div>
      <h1 class="title">${ico.doc}Timesheet Template${chevron}</h1>
      <div class="right-tools">
        <button aria-label="Search">${ico.search}</button>
        <button aria-label="Collaborators">${ico.people}</button>
      </div>
    </header>`;
  }

  private ribbon() {
    const h = (ls: number[][], n = 27) => bars(ls, n);
    return html`<section class="ribbon">
      <div class="tabrow">
        <nav class="tabs">
          ${TABS.map((t, i) => html`<button class=${classMap({ tab: true, active: i === 0 })}>${t}</button>`)}
          <button class="tellme">${ico.bulb}Tell me</button>
        </nav>
        <div class="actions">
          <button class="action">${ico.share}Share</button>
          <button class="action">${ico.comment}Comments</button>
        </div>
      </div>
      <div class="groups">
        <div class="group g-clip">
          ${this.big(ico.paste, "Paste", "", true, "muted paste")}
          <div class="rows">
            <button aria-label="Cut">${ico.cut}</button>
            <button aria-label="Copy">${ico.copy}${chevron}</button>
            <button aria-label="Format Painter">${ico.brush}</button>
          </div>
        </div>
        <div class="group g-font"><div class="stack">
          <div class="line top">
            ${this.pick("family", "Font", "Times New Roman")}
            ${this.pick("size", "Font size", "12")}
            <button class="grow" aria-label="Increase font size">${ico.grow}</button>
            <button aria-label="Decrease font size">${ico.shrink}</button>
          </div>
          <div class="line marks">
            <button class="bold">B</button><button class="italic">I</button><button class="under">U</button>
            <button aria-label="Underline options">${chevron}</button>
            <span class="sep"></span>
            <button aria-label="Borders">${ico.borders}</button><button aria-label="Border options">${chevron}</button>
            <span class="sep"></span>
            <button aria-label="Fill color">${ico.bucket}</button><button aria-label="Fill options">${chevron}</button>
            <button aria-label="Font color">${ico.fontColor}</button><button aria-label="Font color options">${chevron}</button>
          </div>
        </div></div>
        <div class="group g-align"><div class="stack">
          <div class="line vert">
            <button aria-label="Top align">${bars([[0, 28], [5, 23], [0, 28]], 34)}</button>
            <button aria-label="Middle align">${bars([[0, 28], [5, 23], [0, 28]], 19)}</button>
            <button class="pressed" aria-label="Bottom align">${bars([[0, 28], [5, 23], [0, 28]], 34, 15)}</button>
            <span class="sep"></span>
            <button aria-label="Orientation">${ico.angle}</button><button aria-label="Orientation options">${chevron}</button>
          </div>
          <div class="line horiz">
            <button aria-label="Align left">${h([[0, 28], [0, 19], [0, 28], [0, 19]])}</button>
            <button aria-label="Center">${h([[0, 28], [5, 23], [0, 28], [5, 23]])}</button>
            <button aria-label="Align right">${h([[0, 28], [9, 28], [0, 28], [9, 28]])}</button>
            <span class="sep"></span>
            <button aria-label="Decrease indent">${ico.outdent}</button>
            <button aria-label="Increase indent">${ico.indent}</button>
          </div>
        </div></div>
        <div class="group g-wrap"><div class="stack">
          <button class="labeled">${ico.wrap}Wrap Text${chevron}</button>
          <button class="labeled">${ico.merge}Merge &amp; Center${chevron}</button>
        </div></div>
        <div class="group g-number"><div class="stack">
          ${this.pick("format", "Number format", "General")}
          <div class="line numbers">
            <button class="sym">$</button><button aria-label="Currency options">${chevron}</button>
            <button class="sym">%</button><button class="comma">,</button>
            <span class="sep"></span>
            <button aria-label="Increase decimal">${ico.decInc}</button>
            <button aria-label="Decrease decimal">${ico.decDec}</button>
          </div>
        </div></div>
        <div class="group g-styles">
          ${this.big(ico.condFmt, "Conditional", "Formatting")}
          ${this.big(ico.fmtTable, "Format", "as Table")}
          ${this.big(ico.cellStyles, "Cell", "Styles")}
        </div>
        <div class="group g-cells"><div class="rows">
          <button>${ico.insCells}Insert${chevron}</button>
          <button>${ico.delCells}Delete${chevron}</button>
          <button>${ico.fmtCells}Format${chevron}</button>
        </div></div>
        <div class="group g-edit">
          <div class="rows">
            <button aria-label="AutoSum">${ico.sum}${chevron}</button>
            <button aria-label="Fill">${ico.fill}${chevron}</button>
            <button aria-label="Clear">${ico.eraser}${chevron}</button>
          </div>
          ${this.big(ico.sort, "Sort &", "Filter", true, "sort")}
          ${this.big(ico.find, "Find &", "Select")}
        </div>
        <div class="group g-analyze">${this.big(ico.analyze, "Analyze", "Data", false, "solo")}</div>
        <div class="group g-solver">${this.big(ico.solver, "Solver", "", false, "solo")}</div>
      </div>
    </section>`;
  }

  private formulaBar() {
    return html`<section class="formula">
      <div class="namebox">
        <input aria-label="Name box" value="AB37">
        <button aria-label="Names"><svg width="13" height="33" viewBox="0 0 13 33" fill="#555"><path d="M6.500 0 13 11H0zM6.500 33 13 22H0z"/></svg></button>
      </div>
      <div class="fx">
        <button aria-label="Cancel"><svg width="22" height="22" viewBox="0 0 22 22" stroke="#c6c6c6" stroke-width="4"><path d="m1.500 1.500 19 19m0-19-19 19"/></svg></button>
        <button aria-label="Enter"><svg width="27" height="22" viewBox="0 0 27 22" fill="none" stroke="#c6c6c6" stroke-width="4"><path d="m1.500 13 7 7L25.500 1.500"/></svg></button>
        <button class="fxlabel" aria-label="Insert function">fx</button>
      </div>
      <input class="entry" aria-label="Formula">
      <button class="expand" aria-label="Expand formula bar"><svg width="14" height="12" viewBox="0 0 14 12" fill="#555"><path d="M0 0h14L7 12z"/></svg></button>
    </section>`;
  }

  render() {
    return html`<main class="window">
      ${this.titlebar()} ${this.ribbon()} ${this.formulaBar()}
      <sheet-grid></sheet-grid>
      <nav class="sheets">
        <div class="arrows">
          <button aria-label="Previous sheet"><svg width="15" height="20" viewBox="0 0 15 20" fill="#a9a9a9"><path d="M15 0v20L0 10z"/></svg></button>
          <button aria-label="Next sheet"><svg width="15" height="20" viewBox="0 0 15 20" fill="#a9a9a9"><path d="M0 0v20l15-10z"/></svg></button>
        </div>
        <button class="sheet">Instructions</button>
        <button class="sheet on">Timesheet</button>
        <button class="add" aria-label="New sheet"><svg width="20" height="20" viewBox="0 0 20 20" stroke="#4c4c4c" stroke-width="3"><path d="M10 0v20M0 10h20"/></svg></button>
      </nav>
      <footer class="status">
        <span class="ready">Ready</span>
        <span class="calc">Calculate</span>
        <button aria-label="Record macro">${ico.script}</button>
        <button class="a11y">${ico.access}Accessibility: Investigate</button>
        <div class="views">
          <button class="view on" aria-label="Normal view">${ico.normalView}</button>
          <button class="view" aria-label="Page layout view">${ico.pageView}</button>
          <button class="view" aria-label="Page break preview">${ico.breakView}</button>
          <div class="zoom">
            <button aria-label="Zoom out"><svg width="16" height="16" viewBox="0 0 16 16" stroke="#4c4c4c" stroke-width="3.500"><path d="M0 8h16"/></svg></button>
            <input type="range" aria-label="Zoom" min="0" max="100" value="58">
            <button aria-label="Zoom in"><svg width="16" height="16" viewBox="0 0 16 16" stroke="#4c4c4c" stroke-width="3.500"><path d="M0 8h16M8 0v16"/></svg></button>
            <span class="pct">150%</span>
          </div>
        </div>
      </footer>
    </main>`;
  }
}
